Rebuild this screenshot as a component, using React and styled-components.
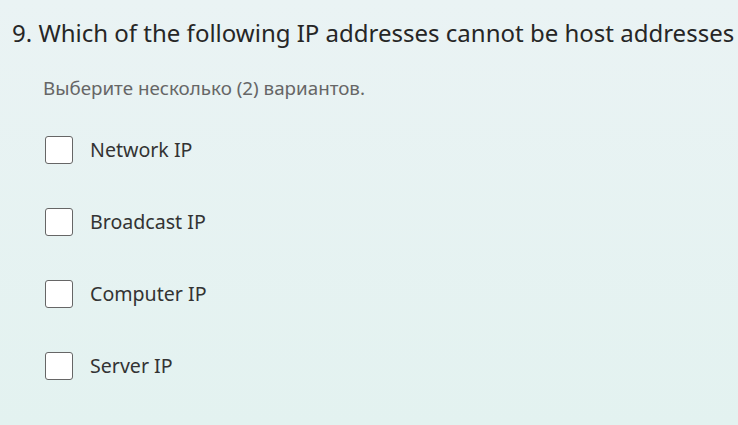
import styled, { createGlobalStyle } from "styled-components";

const GlobalStyle = createGlobalStyle`
  html, body {
    margin: 0;
    padding: 0;
  }

  body {
    font-family: "Noto Sans", "Open Sans", sans-serif;
    overflow: hidden;
  }
`;

const options = ["Network IP", "Broadcast IP", "Computer IP", "Server IP"];

function App() {
  return (
    <>
      <GlobalStyle />
      <Page>
        <Title>9. Which of the following IP addresses cannot be host addresses</Title>
        <Hint>Выберите несколько (2) вариантов.</Hint>
        <OptionList>
          {options.map((option) => (
            <Option key={option}>
              <Box />
              <Label>{option}</Label>
            </Option>
          ))}
        </OptionList>
      </Page>
    </>
  );
}

const Page = styled.div`
  width: 738px;
  height: 425px;
  box-sizing: border-box;
  padding: 16px 0 0 12px;
  background: linear-gradient(180deg, #eaf3f4 0%, #e3f2f0 100%);
  white-space: nowrap;
  overflow: hidden;
`;

const Title = styled.h1`
  margin: 0;
  font-size: 24px;
  font-weight: 400;
  line-height: 34px;
  color: #262626;
`;

const Hint = styled.p`
  margin: 26px 0 0 31px;
  font-size: 18.8px;
  line-height: 24px;
  color: #666;
`;

const OptionList = styled.div`
  display: flex;
  flex-direction: column;
  gap: 43px;
  margin: 35px 0 0 33px;
`;

const Option = styled.label`
  display: flex;
  align-items: center;
  gap: 17px;
  height: 29px;
`;

const Box = styled.span`
  width: 26px;
  height: 26px;
  border: 1.5px solid #666;
  border-radius: 3px;
  background: #fff;
`;

const Label = styled.span`
  font-size: 19.6px;
  color: #333;
`;

export default App;
